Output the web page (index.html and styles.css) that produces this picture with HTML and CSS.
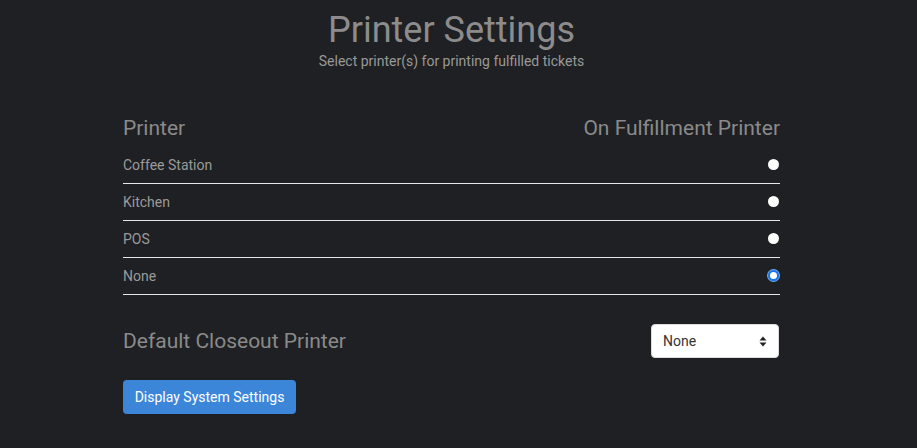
FILE: index.html
```html
<!DOCTYPE html>
<html lang="en">
<head>
<meta charset="utf-8">
<title>Printer Settings</title>
<link rel="stylesheet" href="styles.css">
</head>
<body>
<main class="page">
  <header class="intro">
    <h1 class="title">Printer Settings</h1>
    <p class="subtitle">Select printer(s) for printing fulfilled tickets</p>
  </header>

  <section class="printers">
    <div class="table-head">
      <span>Printer</span>
      <span>On Fulfillment Printer</span>
    </div>
    <label class="row"><span class="name">Coffee Station</span><input class="radio" type="radio" name="fulfill"></label>
    <label class="row"><span class="name">Kitchen</span><input class="radio" type="radio" name="fulfill"></label>
    <label class="row"><span class="name">POS</span><input class="radio" type="radio" name="fulfill"></label>
    <label class="row"><span class="name">None</span><input class="radio" type="radio" name="fulfill" checked></label>
  </section>

  <section class="closeout">
    <span class="closeout-label">Default Closeout Printer</span>
    <div class="select">
      <span>None</span>
      <svg class="caret" width="8" height="11" viewBox="0 0 8 11"><path d="M4 0.5 L7.5 4.5 H0.5 Z M4 10.5 L7.5 6.5 H0.5 Z" fill="#222"/></svg>
    </div>
  </section>

  <button class="btn" type="button">Display System Settings</button>
</main>
</body>
</html>
```

FILE: styles.css
```css
* { box-sizing: border-box; }
html, body { margin: 0; padding: 0; }
body {
  background: #1f2023;
  font-family: Roboto, "Noto Sans", Arial, sans-serif;
  color: #999;
  width: 917px;
  height: 448px;
  overflow: hidden;
}
.page {
  width: 657px;
  margin-left: 123px;
  display: flex;
  flex-direction: column;
}
.intro {
  display: flex;
  flex-direction: column;
  align-items: center;
  padding-top: 9px;
}
.title {
  margin: 0;
  font-size: 36px;
  font-weight: 400;
  line-height: 42px;
  color: #8c8c8c;
}
.subtitle {
  margin: 1px 0 0;
  font-size: 14px;
  line-height: 18px;
  color: #999;
}
.printers {
  margin-top: 45px;
  display: flex;
  flex-direction: column;
}
.table-head {
  display: flex;
  justify-content: space-between;
  font-size: 21px;
  line-height: 26px;
  color: #8a8a8a;
  height: 32px;
}
.row {
  display: flex;
  justify-content: space-between;
  align-items: center;
  height: 37px;
  border-bottom: 1px solid #e6e6e6;
  font-size: 14px;
  color: #9a9a9a;
}
.radio {
  margin: 0 1px 0 0;
  width: 11px;
  height: 11px;
  appearance: none;
  border-radius: 50%;
  background: #fff;
  position: relative;
  top: -1px;
}
.radio:checked {
  border: 2px solid #1a73e8;
  background: #fff;
  box-shadow: 0 0 0 1px #6aaaf5;
}
.closeout {
  margin-top: 29px;
  display: flex;
  justify-content: space-between;
  align-items: center;
}
.closeout-label {
  font-size: 21px;
  color: #8a8a8a;
}
.select {
  width: 128px;
  height: 34px;
  background: #fff;
  border-radius: 4px;
  border: 1px solid #ddd;
  display: flex;
  align-items: center;
  justify-content: space-between;
  padding: 0 11px 0 11px;
  font-size: 14px;
  color: #333;
  margin-right: 1px;
}
.btn {
  align-self: flex-start;
  margin-top: 22px;
  width: 173px;
  height: 34px;
  background: #3b86d8;
  color: #fff;
  border: none;
  border-radius: 4px;
  font-family: inherit;
  font-size: 14px;
  padding: 0;
}
```
